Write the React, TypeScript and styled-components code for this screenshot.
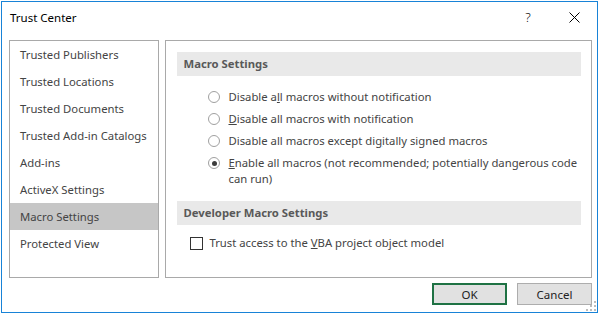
import styled, { createGlobalStyle } from "styled-components";

const Global = createGlobalStyle`
  html, body {
    margin: 0;
    padding: 0;
    background: #ffffff;
  }
  body {
    font-family: "Noto Sans", "Open Sans", sans-serif;
    font-size: 11.3px;
    color: #444444;
  }
`;

const Window = styled.div`
  box-sizing: border-box;
  margin: 1px 0 0 1px;
  width: 597px;
  height: 312px;
  border: 1px solid #1883d7;
  background: #ffffff;
  display: flex;
  flex-direction: column;
  position: relative;
`;

const TitleBar = styled.div`
  height: 30px;
  display: flex;
  align-items: center;
  padding-left: 8px;
`;

const Title = styled.div`
  flex: 1;
  color: #000000;
  font-size: 11.5px;
`;

const TitleButton = styled.div`
  width: 46px;
  height: 30px;
  display: flex;
  align-items: center;
  justify-content: center;
  color: #000000;
  font-size: 13px;
  font-weight: 300;
`;

const Body = styled.div`
  display: flex;
  gap: 6px;
  padding: 8px 5px 0 7px;
`;

const Panel = styled.div<{ $width: number }>`
  box-sizing: border-box;
  width: ${(p) => p.$width}px;
  height: 238px;
  border: 1px solid #a9a9a9;
`;

const NavItem = styled.div<{ $selected?: boolean }>`
  height: 27px;
  line-height: 27px;
  padding-left: 10px;
  color: #444444;
  background: ${(p) => (p.$selected ? "#c6c6c6" : "transparent")};
  white-space: nowrap;
`;

const Content = styled.div`
  padding: 11px 10px 0 11px;
`;

const SectionHead = styled.div<{ $top?: number }>`
  height: 24px;
  line-height: 24px;
  margin-top: ${(p) => p.$top ?? 0}px;
  padding-left: 6px;
  background: #e9e9e9;
  font-weight: bold;
  color: #595959;
`;

const OptionList = styled.div`
  display: flex;
  flex-direction: column;
  gap: 6px;
  padding: 13px 0 0 31px;
`;

const Option = styled.div`
  display: flex;
  align-items: flex-start;
  gap: 8px;
  line-height: 16px;
`;

const Radio = styled.span<{ $checked?: boolean }>`
  box-sizing: border-box;
  flex: none;
  width: 12px;
  height: 12px;
  margin-top: 2px;
  border: 1px solid #a0a0a0;
  border-radius: 50%;
  background: #ffffff;
  display: flex;
  align-items: center;
  justify-content: center;
  &::after {
    content: "";
    display: ${(p) => (p.$checked ? "block" : "none")};
    width: 5px;
    height: 5px;
    border-radius: 50%;
    background: #3c3c3c;
  }
`;

const Check = styled.span`
  box-sizing: border-box;
  flex: none;
  width: 13px;
  height: 13px;
  margin-top: 2px;
  border: 1px solid #333333;
  background: #ffffff;
`;

const CheckRow = styled(Option)`
  gap: 6px;
  padding: 10px 0 0 13px;
`;

const Footer = styled.div`
  display: flex;
  justify-content: flex-end;
  gap: 10px;
  padding: 5px 5px 0 0;
`;

const Button = styled.button<{ $default?: boolean }>`
  box-sizing: border-box;
  width: 75px;
  height: 22px;
  padding: 0;
  font-family: inherit;
  font-size: 11.5px;
  color: #222222;
  background: #e1e1e1;
  border: ${(p) => (p.$default ? "2px solid #1f7244" : "1px solid #adadad")};
`;

const Grip = styled.svg`
  position: absolute;
  right: 1px;
  bottom: 1px;
`;

const navItems = [
  "Trusted Publishers",
  "Trusted Locations",
  "Trusted Documents",
  "Trusted Add-in Catalogs",
  "Add-ins",
  "ActiveX Settings",
  "Macro Settings",
  "Protected View",
];

export default function App() {
  return (
    <>
      <Global />
      <Window>
        <TitleBar>
          <Title>Trust Center</Title>
          <TitleButton>?</TitleButton>
          <TitleButton>
            <svg width="11" height="11" viewBox="0 0 11 11">
              <path d="M0.5 0.5 L10.5 10.5 M10.5 0.5 L0.5 10.5" stroke="#000" strokeWidth="1" />
            </svg>
          </TitleButton>
        </TitleBar>
        <Body>
          <Panel $width={151}>
            {navItems.map((item) => (
              <NavItem key={item} $selected={item === "Macro Settings"}>
                {item}
              </NavItem>
            ))}
          </Panel>
          <Panel $width={428}>
            <Content>
              <SectionHead>Macro Settings</SectionHead>
              <OptionList>
                <Option>
                  <Radio />
                  <span>Disable a<u>l</u>l macros without notification</span>
                </Option>
                <Option>
                  <Radio />
                  <span><u>D</u>isable all macros with notification</span>
                </Option>
                <Option>
                  <Radio />
                  <span>Disable all macros except di<u>g</u>itally signed macros</span>
                </Option>
                <Option>
                  <Radio $checked />
                  <span>
                    <u>E</u>nable all macros (not recommended; potentially dangerous code can run)
                  </span>
                </Option>
              </OptionList>
              <SectionHead $top={14}>Developer Macro Settings</SectionHead>
              <CheckRow>
                <Check />
                <span>Trust access to the <u>V</u>BA project object model</span>
              </CheckRow>
            </Content>
          </Panel>
        </Body>
        <Footer>
          <Button $default>OK</Button>
          <Button>Cancel</Button>
        </Footer>
        <Grip width="10" height="10" viewBox="0 0 10 10">
          {[
            [8, 0], [8, 4], [4, 4], [8, 8], [4, 8], [0, 8],
          ].map(([x, y]) => (
            <rect key={`${x}-${y}`} x={x} y={y} width="2" height="2" fill="#bcbcbc" />
          ))}
        </Grip>
      </Window>
    </>
  );
}
